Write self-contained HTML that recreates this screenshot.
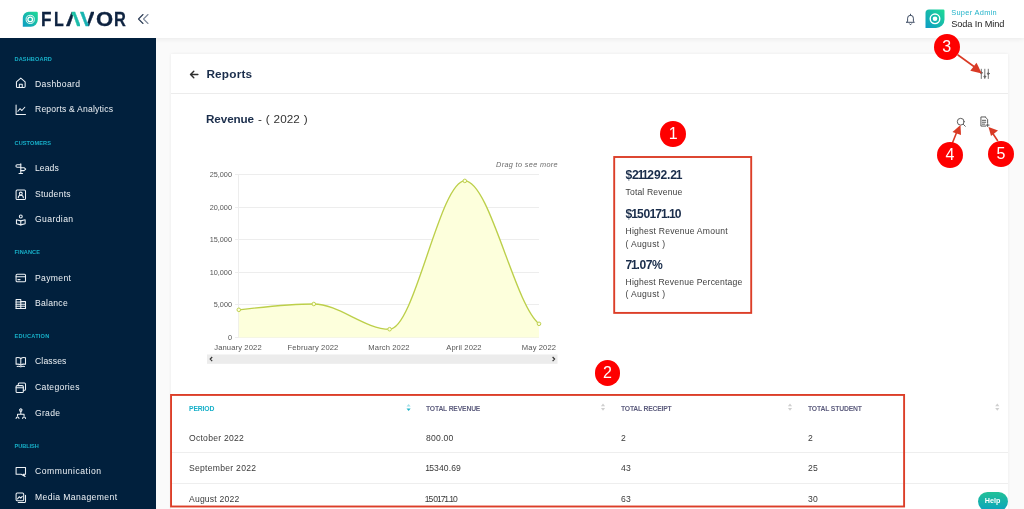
<!DOCTYPE html>
<html><head><meta charset="utf-8"><title>Reports</title>
<style>
*{box-sizing:border-box;margin:0;padding:0}
body{will-change:transform}
html,body{width:1024px;height:509px;overflow:hidden;background:#fafafa;font-family:"Liberation Sans",sans-serif;}
.abs{position:absolute}
#hdr{position:absolute;left:0;top:0;width:1024px;height:38px;background:#fff;box-shadow:0 1px 5px rgba(0,0,0,.07);z-index:5}
#side{position:absolute;left:0;top:38px;width:156px;height:471px;background:#01203d;z-index:6}
.sec{position:absolute;left:14.5px;margin-top:0;font-size:5.6px;font-weight:bold;color:#17b0c9;letter-spacing:.1px;line-height:8px;white-space:nowrap}
.mi{position:absolute;left:35px;margin-top:.4px;font-size:8.6px;color:#eef2f6;line-height:12px;white-space:nowrap;letter-spacing:.15px}
.ic{position:absolute;left:15px;margin-top:.6px;width:11.6px;height:11.6px}
.ic svg{display:block;width:11.6px;height:11.6px;fill:none;stroke:#eef2f6;stroke-width:1.45;stroke-linecap:round;stroke-linejoin:round}
#card{position:absolute;left:171px;top:53.5px;width:836.5px;height:470px;background:#fff;box-shadow:0 0 3px rgba(0,0,0,.07);}
#chead{position:absolute;left:0;top:0;width:836.5px;height:40.5px;border-bottom:1px solid #ececec}
.t{position:absolute;white-space:nowrap;line-height:1}
.lg{position:absolute;top:0;transform-origin:0 50%;display:block}
.gA{background:linear-gradient(79deg,#0e2340 50%,#1fc6a0 50%,#14aab9 100%);-webkit-background-clip:text;background-clip:text;color:transparent}
.gV{background:linear-gradient(79deg,#1fc6a0 0%,#14aab9 50%,#0e2340 50%);-webkit-background-clip:text;background-clip:text;color:transparent}
.n1{margin:0 var(--m)}
.navy{color:#1a2d4b}
.num{position:absolute;border-radius:50%;background:#fe0000;color:#fff;width:25.8px;height:25.8px;text-align:center;font-size:16px;line-height:25.8px;z-index:20}
.th{position:absolute;top:404.5px;font-size:6.8px;font-weight:bold;color:#5d5d7e;letter-spacing:0px;line-height:8px;white-space:nowrap}
.td{position:absolute;font-size:8.6px;color:#3a3a3a;line-height:12px;white-space:nowrap;letter-spacing:.1px}
.rl{position:absolute;left:171px;width:837px;height:1px;background:#eeeeee}
.st{position:absolute;left:625.5px;white-space:nowrap}
.sb{font-size:12.1px;font-weight:bold;color:#1a2d4b;line-height:14px}
.ss{font-size:8.6px;color:#3d3d3d;line-height:11px;letter-spacing:.15px}
</style></head><body>

<div id="hdr">
  <svg class="abs" style="left:22px;top:11px" width="17" height="17" viewBox="0 0 17 17">
    <defs><linearGradient id="lg" x1="1" y1="0" x2="0" y2="1"><stop offset="0" stop-color="#1fdc96"/><stop offset=".5" stop-color="#17b9ab"/><stop offset="1" stop-color="#0c9cc6"/></linearGradient></defs>
    <path d="M6.8 .8 H14.6 A1.2 1.2 0 0 1 15.8 2 V8.8 A7 7 0 0 1 8.8 15.8 H.8 V6.8 A6 6 0 0 1 6.8 .8 Z" fill="url(#lg)"/>
    <circle cx="8.2" cy="8.4" r="4.1" fill="none" stroke="#fff" stroke-width=".9"/>
    <circle cx="8.2" cy="8.4" r="2.3" fill="none" stroke="#fff" stroke-width="1.3"/>
  </svg>
  <div id="logo" class="abs" style="left:0;top:8.3px;height:22px;font-size:20px;font-weight:bold;color:#0e2340;line-height:22px;-webkit-text-stroke:.3px #0e2340">
    <span class="lg" style="left:40.8px;transform:scaleX(.86)">F</span><span class="lg" style="left:53.7px;transform:scaleX(.8)">L</span><span class="lg gA" style="left:65.6px;transform:scaleX(1.1);-webkit-text-stroke:.35px transparent">Λ</span><span class="lg gV" style="left:80.2px;transform:scaleX(1.09);-webkit-text-stroke:.35px transparent">V</span><span class="lg" style="left:95.6px;transform:scaleX(1.1)">O</span><span class="lg" style="left:114.2px;transform:scaleX(.82)">R</span>
  </div>
  <svg class="abs" style="left:137px;top:13px" width="13" height="12" viewBox="0 0 13 12" fill="none" stroke="#2b3b55" stroke-width="1.1" stroke-linecap="round" stroke-linejoin="round"><path d="M6 1.5 L1.5 6 L6 10.5"/><path d="M11 1.5 L6.5 6 L11 10.5" stroke="#7f8a9c"/></svg>

  <svg class="abs" style="left:905px;top:13px" width="11" height="13" viewBox="0 0 11 13" fill="none" stroke="#2b3b55" stroke-width=".9" stroke-linecap="round" stroke-linejoin="round"><path d="M2.6 8.2 V5.2 A2.9 2.9 0 0 1 8.4 5.2 V8.2 L9.4 9.3 H1.6 Z"/><path d="M5.5 1.2 V2.2"/><path d="M4.5 10.9 A1.1 1.1 0 0 0 6.5 10.9"/></svg>
  <svg class="abs" style="left:924.5px;top:8.5px" width="20" height="20" viewBox="0 0 20 20">
    <path d="M4 .5 H18.3 A1.2 1.2 0 0 1 19.5 1.7 V10.5 A8.5 8.5 0 0 1 11 19 H.5 V4 A3.5 3.5 0 0 1 4 .5 Z" fill="url(#lg)"/>
    <circle cx="10" cy="9.8" r="4.8" fill="none" stroke="#fff" stroke-width="1.4"/>
    <circle cx="10" cy="9.8" r="2.3" fill="#fff"/>
  </svg>
  <div class="t" style="left:951.2px;top:9.3px;font-size:7.4px;color:#22b3c9;letter-spacing:0.317px">Super Admin</div>
  <div class="t" style="left:951.2px;top:19.6px;font-size:9.2px;color:#222;letter-spacing:-0.078px">Soda In Mind</div>
</div>

<div id="side">
  <div class="sec" style="top:17px;letter-spacing:0.126px">DASHBOARD</div>
  <div class="ic" style="top:38.9px"><svg viewBox="0 0 16 16"><path d="M2 6.8 L8 1.6 L14 6.8 V13 A1.5 1.5 0 0 1 12.5 14.5 H3.5 A1.5 1.5 0 0 1 2 13 Z"/><path d="M6 14.5 V10 H10 V14.5"/></svg></div>
  <div class="mi" style="top:39.5px;letter-spacing:0.383px">Dashboard</div>
  <div class="ic" style="top:65px"><svg viewBox="0 0 16 16"><path d="M1.5 1.5 V14.5 H14.5"/><path d="M4 10 L7 6.5 L9.5 9 L13.5 4.5"/></svg></div>
  <div class="mi" style="top:65px;letter-spacing:0.194px">Reports &amp; Analytics</div>

  <div class="sec" style="top:101px;letter-spacing:0.095px">CUSTOMERS</div>
  <div class="ic" style="top:124px"><svg viewBox="0 0 16 16"><path d="M8 1.2 V14.5"/><path d="M5.5 14.5 H10.5"/><path d="M8 2.5 H3 A1.5 1.5 0 0 0 3 6 H8"/><path d="M8 6.5 H12.5 L14.8 8.5 L12.5 10.5 H8"/></svg></div>
  <div class="mi" style="top:123.5px;letter-spacing:0.077px">Leads</div>
  <div class="ic" style="top:150px"><svg viewBox="0 0 16 16"><rect x="1.5" y="1.5" width="13" height="13" rx="1.5"/><circle cx="8" cy="6.3" r="2"/><path d="M4.5 12 A3.5 3.5 0 0 1 11.5 12"/></svg></div>
  <div class="mi" style="top:149.5px;letter-spacing:0.234px">Students</div>
  <div class="ic" style="top:175.5px"><svg viewBox="0 0 16 16"><circle cx="8" cy="3.5" r="2"/><path d="M2 8 L8 9.5 L14 8 V13.5 L8 15 L2 13.5 Z"/><path d="M8 9.5 V15"/></svg></div>
  <div class="mi" style="top:175px;letter-spacing:0.392px">Guardian</div>

  <div class="sec" style="top:210px;letter-spacing:0.091px">FINANCE</div>
  <div class="ic" style="top:233px"><svg viewBox="0 0 16 16"><rect x="1.5" y="3" width="13" height="10.5" rx="1.5"/><path d="M1.5 6.5 H14.5"/><path d="M4 10.5 H7"/></svg></div>
  <div class="mi" style="top:233.5px;letter-spacing:0.34px">Payment</div>
  <div class="ic" style="top:259.1px"><svg viewBox="0 0 16 16"><path d="M1.5 14.5 V2 H8 V14.5"/><path d="M8 5 H14.5 V14.5 H1.5"/><path d="M1.5 5.5H8M1.5 8.5H14.5M1.5 11.5H14.5"/></svg></div>
  <div class="mi" style="top:259px;letter-spacing:0.277px">Balance</div>

  <div class="sec" style="top:294px;letter-spacing:0.239px">EDUCATION</div>
  <div class="ic" style="top:317.5px"><svg viewBox="0 0 16 16"><path d="M8 3.5 C6 2 3.5 2 1.5 2.5 V11.5 C3.5 11 6 11 8 12.5 C10 11 12.5 11 14.5 11.5 V2.5 C12.5 2 10 2 8 3.5 Z"/><path d="M8 3.5 V12.5"/><path d="M3 14.5 C5 14 6.5 14.2 8 15 C9.5 14.2 11 14 13 14.5"/></svg></div>
  <div class="mi" style="top:317px;letter-spacing:0.132px">Classes</div>
  <div class="ic" style="top:343.5px"><svg viewBox="0 0 16 16"><rect x="1.5" y="5" width="10" height="9.5" rx="1.5"/><path d="M1.5 8 H11.5"/><path d="M4.5 5 V3 A1.5 1.5 0 0 1 6 1.5 H13 A1.5 1.5 0 0 1 14.5 3 V10 A1.5 1.5 0 0 1 13 11.5 H11.5"/></svg></div>
  <div class="mi" style="top:343px;letter-spacing:0.323px">Categories</div>
  <div class="ic" style="top:369px"><svg viewBox="0 0 16 16"><path d="M8 1 L9.7 2.2 L9.1 4.3 H6.9 L6.3 2.2 Z"/><path d="M8 4.5 V8.5 M3.5 11 V8.5 H12.5 V11"/><path d="M1.5 14.5 A2 2 0 0 1 5.5 14.5 M10.5 14.5 A2 2 0 0 1 14.5 14.5"/></svg></div>
  <div class="mi" style="top:369px;letter-spacing:0.283px">Grade</div>

  <div class="sec" style="top:404px;letter-spacing:-0.038px">PUBLISH</div>
  <div class="ic" style="top:427px"><svg viewBox="0 0 16 16"><path d="M1.5 2 H14.5 V11.5 H11.5 L14 14.5 L8.5 11.5 H1.5 Z"/></svg></div>
  <div class="mi" style="top:426.5px;letter-spacing:0.522px">Communication</div>
  <div class="ic" style="top:453.3px"><svg viewBox="0 0 16 16"><rect x="1.5" y="1.5" width="10.5" height="10.5" rx="1.5"/><path d="M14.5 4.5 V13 A1.5 1.5 0 0 1 13 14.5 H4.5"/><path d="M3.5 9.5 L6 6.5 L8 8.5 L10 6"/></svg></div>
  <div class="mi" style="top:452.9px;letter-spacing:0.409px">Media Management</div>
</div>

<div id="card">
  <div id="chead"></div>
</div>

<!-- card header -->
<svg class="abs" style="left:188.5px;top:69px" width="11" height="11" viewBox="0 0 11 11" fill="none" stroke="#2e2e2e" stroke-width="1.4" stroke-linecap="round" stroke-linejoin="round"><path d="M8.9 5.5 H1.5 M4.8 2.2 L1.5 5.5 L4.8 8.8"/></svg>
<div class="t navy" style="left:206.4px;top:69.1px;font-size:11.8px;font-weight:bold;letter-spacing:.2px">Reports</div>
<svg class="abs" style="left:979px;top:67.5px" width="12" height="12" viewBox="0 0 12 12" fill="none" stroke="#666" stroke-width=".9" stroke-linecap="round"><path d="M2.3 1.2 V10.5 M5.8 1.2 V10.5 M9.3 1.2 V10.5"/><circle cx="2.3" cy="4.8" r=".9" fill="#666"/><circle cx="5.8" cy="8.6" r=".9" fill="#666"/><circle cx="9.3" cy="5.6" r=".9" fill="#666"/></svg>

<div class="t" style="left:206px;top:113px;font-size:11.7px;color:#333"><b class="navy" id="rv" style="letter-spacing:-.1px">Revenue</b><span id="rv2" style="letter-spacing:.1px;word-spacing:.5px"> - ( 2022 )</span></div>

<!-- search + doc icons -->
<svg class="abs" style="left:956.3px;top:116.8px" width="12" height="12" viewBox="0 0 12 12" fill="none" stroke="#555" stroke-width=".95" stroke-linecap="round"><circle cx="4.7" cy="4.7" r="3.4"/><path d="M7.4 7.4 L9.3 9.3"/></svg>
<svg class="abs" style="left:979px;top:116px" width="11.5" height="11.5" viewBox="0 0 12 12" fill="none" stroke="#555" stroke-width="1" stroke-linecap="round" stroke-linejoin="round"><path d="M6.5 1 H2 V10.5 H7"/><path d="M6.5 1 L9 3.5 V7"/><path d="M3.5 4.5 H7 M3.5 6.5 H7 M3.5 8.5 H6"/><path d="M9 8 V11 M7.5 9.5 H10.5"/></svg>

<!-- chart -->
<svg class="abs" style="left:190px;top:150px" width="380" height="220" viewBox="190 150 380 220">
  <g stroke="#ededed" stroke-width="1" shape-rendering="crispEdges">
    <path d="M235 174.500H539M235 207.500H539M235 239.500H539M235 272.500H539M235 304.500H539M235 337.500H539"/>
    <path d="M238.5 174V337"/>
  </g>
  <path id="area" d="M238.8 309.8 C263.8 306.9 288.8 304 313.8 304 C339 304 364.4 329.2 389.6 329.2 C414.6 329.2 439.8 180.9 464.8 180.9 C489.6 180.9 514.2 303.8 539 323.8 L539 337.5 L238.8 337.5 Z" fill="#fdffdc"/>
  <path d="M238.8 309.8 C263.8 306.9 288.8 304 313.8 304 C339 304 364.4 329.2 389.6 329.2 C414.6 329.2 439.8 180.9 464.8 180.9 C489.6 180.9 514.2 303.8 539 323.8" fill="none" stroke="#bccf4a" stroke-width="1.35"/>
  <g fill="#fdffdc" stroke="#bfd14f" stroke-width="1">
    <circle cx="238.8" cy="309.8" r="1.8"/><circle cx="313.8" cy="304" r="1.8"/><circle cx="389.6" cy="329.2" r="1.8"/><circle cx="464.8" cy="180.9" r="1.8"/><circle cx="539" cy="323.8" r="1.8"/>
  </g>
  <g font-family="Liberation Sans, sans-serif" font-size="7.3" fill="#555" text-anchor="end">
    <text x="232" y="177">25,000</text><text x="232" y="209.5">20,000</text><text x="232" y="242">15,000</text><text x="232" y="274.5">10,000</text><text x="232" y="307">5,000</text><text x="232" y="339.8">0</text>
  </g>
  <g font-family="Liberation Sans, sans-serif" font-size="7.6" letter-spacing=".12" fill="#555" text-anchor="middle">
    <text x="238" y="349.8">January 2022</text><text x="313" y="349.8">February 2022</text><text x="389" y="349.8">March 2022</text><text x="464" y="349.8">April 2022</text><text x="539" y="349.8">May 2022</text>
  </g>
  <text x="558" y="166.5" font-family="Liberation Sans, sans-serif" font-size="7.3" letter-spacing=".35" font-style="italic" fill="#6a6a6a" text-anchor="end">Drag to see more</text>
  <rect x="207" y="354.5" width="350.5" height="9.3" fill="#ececec"/>
  <path d="M212.2 357 L210.2 359.1 L212.2 361.2 M552.6 357 L554.6 359.1 L552.6 361.2" fill="none" stroke="#333" stroke-width="1.2"/>
</svg>

<!-- stats -->
<div class="st sb" style="top:167.5px;letter-spacing:-0.15px;--m:-1.129px">$2<span class="n1">1</span><span class="n1">1</span>292.2<span class="n1">1</span></div>
<div class="st ss" style="top:187.0px;letter-spacing:0.158px">Total Revenue</div>
<div class="st sb" style="top:206.6px;letter-spacing:-0.15px;--m:-0.818px">$<span class="n1">1</span>50<span class="n1">1</span>7<span class="n1">1</span>.<span class="n1">1</span>0</div>
<div class="st ss" style="top:225.9px;letter-spacing:0.22px">Highest Revenue Amount</div>
<div class="st ss" style="top:238.5px;letter-spacing:0.301px">( August )</div>
<div class="st sb" style="top:257.8px;letter-spacing:-0.45px;--m:-0.765px">7<span class="n1">1</span>.07%</div>
<div class="st ss" style="top:276.75px;letter-spacing:0.181px">Highest Revenue Percentage</div>
<div class="st ss" style="top:289.0px;letter-spacing:0.301px">( August )</div>

<!-- table -->
<div class="th" style="left:189px;color:#17b0c9;letter-spacing:-0.129px">PERIOD</div>
<div class="th" style="left:426px;letter-spacing:-0.189px">TOTAL REVENUE</div>
<div class="th" style="left:621px;letter-spacing:-0.219px">TOTAL RECEIPT</div>
<div class="th" style="left:808px;letter-spacing:-0.161px">TOTAL STUDENT</div>
<svg class="abs" style="left:0;top:400px" width="1024" height="16" viewBox="0 400 1024 16">
  <path d="M406.5 406.6 L408.6 403.9 L410.7 406.6 Z" fill="#a5e0e8"/><path d="M406.5 408.4 L408.6 411.1 L410.7 408.4 Z" fill="#22b5c9"/>
  <path d="M600.9 406.3 L603.0 403.6 L605.1 406.3 Z" fill="#cfcfcf"/><path d="M600.9 408.1 L603.0 410.8 L605.1 408.1 Z" fill="#cfcfcf"/><path d="M787.9 406.3 L790.0 403.6 L792.1 406.3 Z" fill="#cfcfcf"/><path d="M787.9 408.1 L790.0 410.8 L792.1 408.1 Z" fill="#cfcfcf"/><path d="M995.2 406.3 L997.3 403.6 L999.4 406.3 Z" fill="#cfcfcf"/><path d="M995.2 408.1 L997.3 410.8 L999.4 408.1 Z" fill="#cfcfcf"/>
</svg>
<div class="rl" style="top:452px"></div>
<div class="rl" style="top:483px"></div>
<div class="td" style="left:189px;top:431.5px;letter-spacing:0.251px">October 2022</div><div class="td" style="left:426px;top:431.5px;letter-spacing:0.202px">800.00</div><div class="td" style="left:621px;top:431.5px">2</div><div class="td" style="left:808px;top:431.5px">2</div>
<div class="td" style="left:189px;top:462px;letter-spacing:0.268px">September 2022</div><div class="td" style="left:426px;top:462px;letter-spacing:0.1px;--m:-0.831px"><span class="n1">1</span>5340.69</div><div class="td" style="left:621px;top:462px">43</div><div class="td" style="left:808px;top:462px">25</div>
<div class="td" style="left:189px;top:492.5px;letter-spacing:0.194px">August 2022</div><div class="td" style="left:426px;top:492.5px;letter-spacing:0.1px;--m:-1.223px"><span class="n1">1</span>50<span class="n1">1</span>7<span class="n1">1</span>.<span class="n1">1</span>0</div><div class="td" style="left:621px;top:492.5px">63</div><div class="td" style="left:808px;top:492.5px">30</div>

<!-- annotations -->
<div class="num" style="left:660.3px;top:121.3px">1</div>
<div class="num" style="left:594.5px;top:360.0px">2</div>
<div class="num" style="left:933.9px;top:34.0px">3</div>
<div class="num" style="left:937.0px;top:142.4px">4</div>
<div class="num" style="left:988.1px;top:141.3px">5</div>
<svg class="abs" style="left:0;top:0;z-index:19" width="1024" height="509" viewBox="0 0 1024 509">
  <rect x="614.2" y="157" width="137" height="155.9" fill="none" stroke="#dc3e28" stroke-width="1.9"/>
  <rect x="171.05" y="394.95" width="733.05" height="111.55" fill="none" stroke="#dc3e28" stroke-width="1.9"/>
  <g stroke="#d93a25" stroke-width="1.6" fill="#d93a25" stroke-linecap="round">
    <path d="M958 55 L976 68" fill="none"/><path d="M981.8 73.4 L970.3 70.8 L976.5 62.8 Z" stroke="none"/>
    <path d="M952 144 L958 129" fill="none"/><path d="M960.5 125 L961 135 L952.5 132 Z" stroke="none"/>
    <path d="M997.5 140.5 L991.5 131.5" fill="none"/><path d="M988.5 127 L998 130.5 L991 136 Z" stroke="none"/>
  </g>
</svg>

<!-- help -->
<div class="abs" style="left:977.5px;top:491.5px;width:30px;height:19px;border-radius:9.5px;background:linear-gradient(180deg,#22c197,#0aa3bd);color:#fff;font-size:7.2px;font-weight:bold;text-align:center;line-height:18px;z-index:15">Help</div>

</body></html>
